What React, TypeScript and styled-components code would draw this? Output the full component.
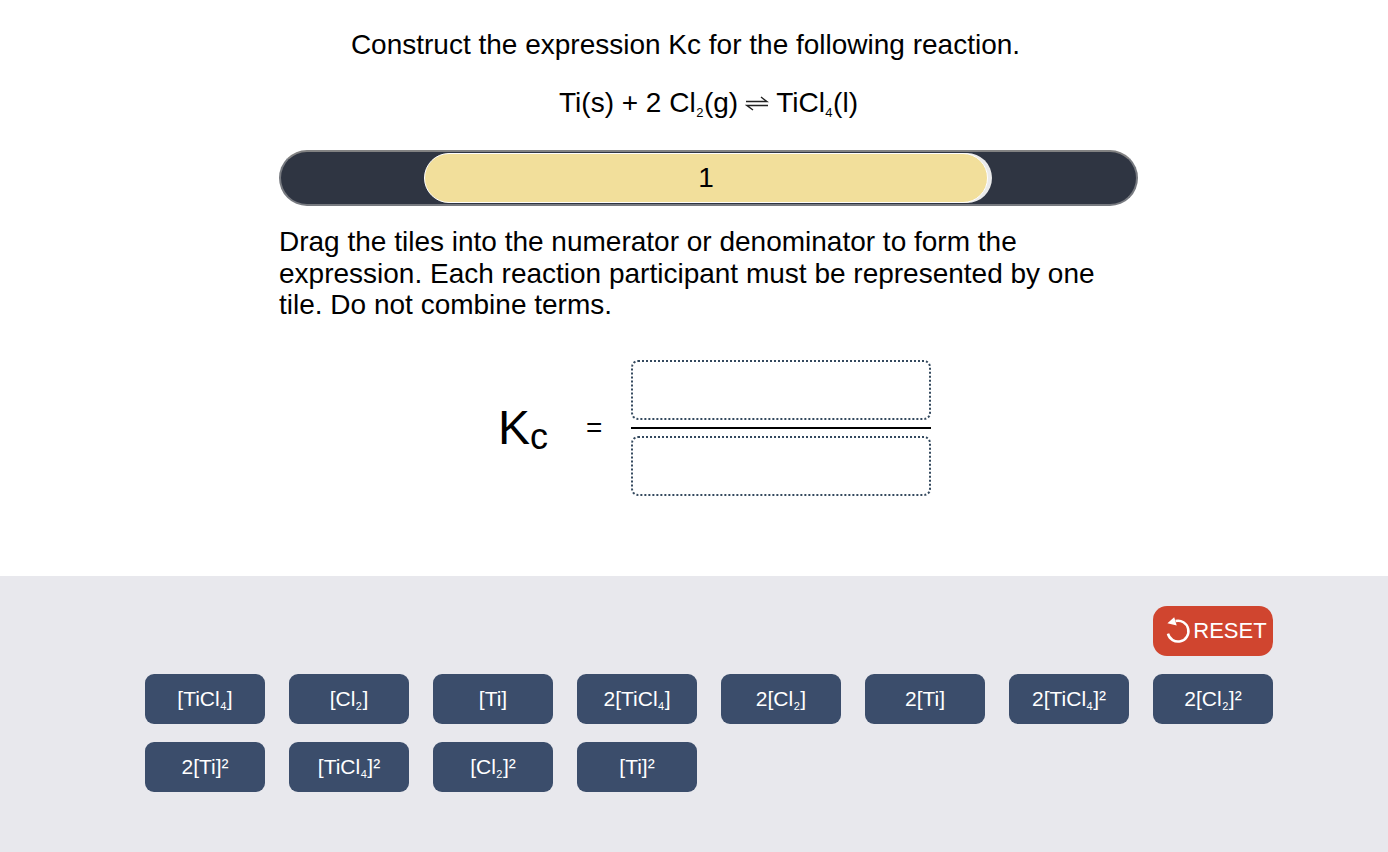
import React from "react";
import styled, { createGlobalStyle } from "styled-components";

const Global = createGlobalStyle`
  html, body { margin: 0; padding: 0; background: #ffffff; }
  body { font-family: "Liberation Sans", Arial, sans-serif; color: #000; }
`;

const Page = styled.div`
  width: 1388px;
  min-height: 852px;
  display: flex;
  flex-direction: column;
`;

const Top = styled.div`
  height: 576px;
  display: flex;
  flex-direction: column;
  align-items: flex-start;
  padding-left: 279px;
  box-sizing: border-box;
`;

const Centered = styled.div`
  width: 859px;
  display: flex;
  justify-content: center;
`;

const Title = styled.div`
  margin-top: 29px;
  font-size: 28px;
  line-height: 32px;
  margin-right: 46px;
`;

const Equation = styled.div`
  margin-top: 26px;
  font-size: 28px;
  line-height: 32px;
  display: flex;
  align-items: center;
  white-space: pre;
`;

const Sub = styled.span<{ $size?: number; $drop?: number }>`
  font-size: ${(p) => p.$size ?? 13}px;
  position: relative;
  top: ${(p) => p.$drop ?? 9}px;
  line-height: 1;
  margin: 0 0.5px;
`;

const Content = styled.div`
  width: 859px;
  display: flex;
  flex-direction: column;
`;

const Track = styled.div`
  margin-top: 31px;
  height: 52px;
  border: 2px solid #777a80;
  border-top: 2px solid #828282;
  border-radius: 30px;
  background: #2f3542;
  display: flex;
  align-items: center;
  padding: 0 0 0 143px;
`;

const Thumb = styled.div`
  width: 562px;
  height: 48px;
  border-radius: 26px;
  background: #f2df9b;
  border: 1px solid #ffffff;
  box-shadow: 4px 0 0 #ebebeb;
  display: flex;
  align-items: center;
  justify-content: center;
  font-size: 28px;
  margin-top: -1px;
`;

const Instructions = styled.p`
  margin: 20px 0 0 0;
  font-size: 28px;
  line-height: 31.5px;
`;

const KRow = styled.div`
  margin-top: 39px;
  padding-left: 219px;
  display: flex;
  align-items: center;
`;

const KLabel = styled.div`
  font-size: 48px;
  width: 56px;
  line-height: 1;
  display: flex;
  align-items: baseline;
`;

const KSub = styled.span`
  font-size: 36px;
  position: relative;
  top: 5px;
`;

const Equals = styled.div`
  font-size: 28px;
  width: 77px;
  padding-left: 32px;
  box-sizing: border-box;
`;

const Fraction = styled.div`
  width: 300px;
  display: flex;
  flex-direction: column;
  gap: 7px;
`;

const DropBox = styled.div`
  height: 60px;
  box-sizing: border-box;
  border: 2px dotted #34495e;
  border-radius: 7px;
`;

const Bar = styled.div`
  height: 2px;
  background: #000;
`;

const Bottom = styled.div`
  flex: 1;
  background: #e8e8ed;
  padding: 30px 0 60px 145px;
  display: flex;
  flex-direction: column;
`;

const Grid = styled.div`
  display: grid;
  grid-template-columns: repeat(8, 120px);
  column-gap: 24px;
  row-gap: 18px;
`;

const ResetButton = styled.button`
  grid-column: 8;
  height: 50px;
  border: none;
  border-radius: 14px;
  background: #d0452f;
  color: #fff;
  font-family: "Liberation Sans", Arial, sans-serif;
  font-size: 22px;
  display: flex;
  align-items: center;
  justify-content: center;
  padding: 0 0 0 4px;
  cursor: pointer;
`;

const Tile = styled.div`
  height: 50px;
  border-radius: 9px;
  background: #3b4d6b;
  color: #fff;
  font-size: 21px;
  display: flex;
  align-items: center;
  justify-content: center;
  white-space: pre;
`;

const ResetIcon = () => (
  <svg width="30" height="30" viewBox="0 0 26 26">
    <path
      d="M10.9 4.4 A9 9 0 1 1 4.3 15.3"
      fill="none"
      stroke="#fff"
      strokeWidth="2.2"
    />
    <polygon points="3.8,6.2 11.9,8.2 9.7,1.0" fill="#fff" />
  </svg>
);

const EqArrow = () => (
  <svg width="24" height="16" viewBox="0 0 24 16" style={{ margin: "0 7px 0 7px" }}>
    <path d="M1 6.5 H22 L16 2" fill="none" stroke="#222" strokeWidth="1.4" />
    <path d="M23 10.5 H2 L8 15" fill="none" stroke="#222" strokeWidth="1.4" />
  </svg>
);

type TileDef = { pre?: string; sp: string; sub?: string; sq?: boolean };

const tiles: TileDef[] = [
  { sp: "TiCl", sub: "4" },
  { sp: "Cl", sub: "2" },
  { sp: "Ti" },
  { pre: "2", sp: "TiCl", sub: "4" },
  { pre: "2", sp: "Cl", sub: "2" },
  { pre: "2", sp: "Ti" },
  { pre: "2", sp: "TiCl", sub: "4", sq: true },
  { pre: "2", sp: "Cl", sub: "2", sq: true },
  { pre: "2", sp: "Ti", sq: true },
  { sp: "TiCl", sub: "4", sq: true },
  { sp: "Cl", sub: "2", sq: true },
  { sp: "Ti", sq: true },
];

export default function App() {
  return (
    <Page>
      <Global />
      <Top>
        <Centered>
          <Title>Construct the expression Kc for the following reaction.</Title>
        </Centered>
        <Centered>
          <Equation>
            Ti(s) + 2 Cl<Sub>2</Sub>(g)
            <EqArrow />
            TiCl<Sub>4</Sub>(l)
          </Equation>
        </Centered>
        <Content>
          <Track>
            <Thumb>1</Thumb>
          </Track>
          <Instructions>
            Drag the tiles into the numerator or denominator to form the expression. Each reaction
            participant must be represented by one tile. Do not combine terms.
          </Instructions>
          <KRow>
            <KLabel>
              K<KSub>c</KSub>
            </KLabel>
            <Equals>=</Equals>
            <Fraction>
              <DropBox />
              <Bar />
              <DropBox />
            </Fraction>
          </KRow>
        </Content>
      </Top>
      <Bottom>
        <Grid>
          <ResetButton>
            <ResetIcon />
            RESET
          </ResetButton>
          {tiles.map((t, i) => (
            <Tile key={i}>
              {t.pre}[{t.sp}
              {t.sub && (
                <Sub $size={11} $drop={7}>
                  {t.sub}
                </Sub>
              )}
              ]{t.sq ? "²" : ""}
            </Tile>
          ))}
        </Grid>
      </Bottom>
    </Page>
  );
}
